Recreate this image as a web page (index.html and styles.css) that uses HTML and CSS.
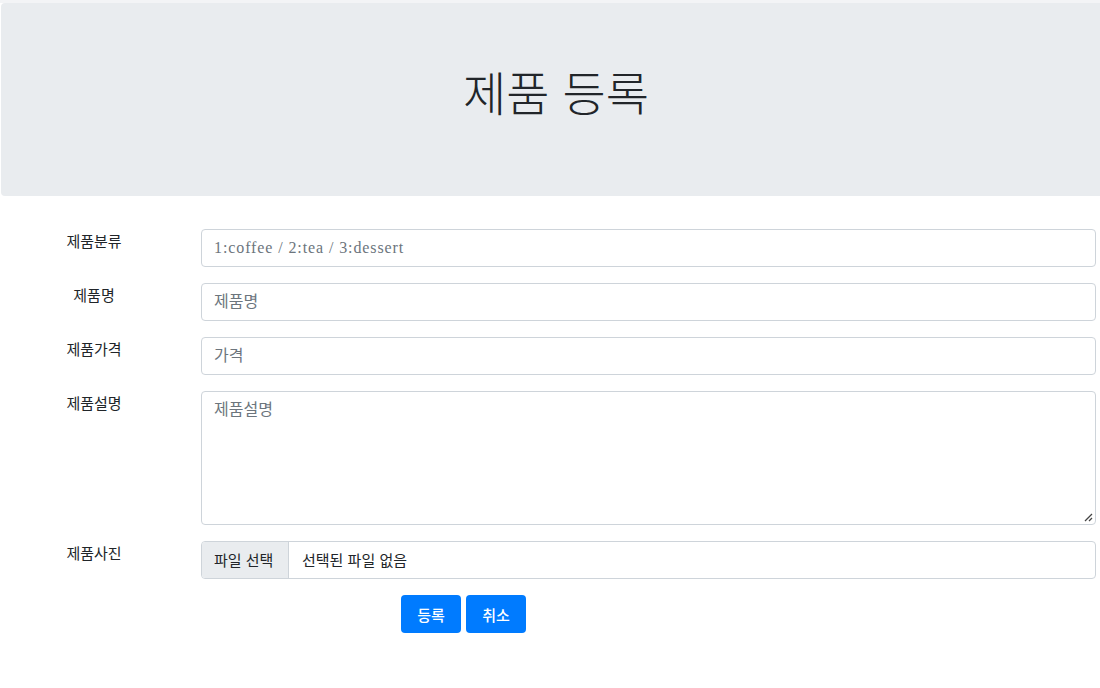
FILE: index.html
```html
<!DOCTYPE html>
<html lang="ko">
<head>
<meta charset="utf-8">
<title>제품 등록</title>
<link rel="stylesheet" href="styles.css">
</head>
<body>
<div class="topstrip"></div>
<div class="jumbotron">
  <h1 class="title">제품 등록</h1>
</div>
<form class="form">
  <label class="label">제품분류</label>
  <div class="control"><span class="ph latin">1:coffee / 2:tea / 3:dessert</span></div>

  <label class="label">제품명</label>
  <div class="control"><span class="ph">제품명</span></div>

  <label class="label">제품가격</label>
  <div class="control"><span class="ph">가격</span></div>

  <label class="label">제품설명</label>
  <div class="control textarea"><span class="ph">제품설명</span>
    <svg class="grip" width="9" height="9" viewBox="0 0 9 9"><path d="M8 1 L1 8 M8 5 L5 8" stroke="#444" stroke-width="1.3" fill="none"/></svg>
  </div>

  <label class="label">제품사진</label>
  <div class="control file"><span class="filebtn">파일 선택</span><span class="filename">선택된 파일 없음</span></div>

  <div class="spacer"></div>
  <div class="actions">
    <button type="button" class="btn">등록</button>
    <button type="button" class="btn">취소</button>
  </div>
</form>
</body>
</html>
```

FILE: styles.css
```css
html, body {
  margin: 0;
  padding: 0;
  overflow: hidden;
  background: #fff;
}
body {
  font-family: "Liberation Serif", "Noto Sans CJK KR", serif;
  color: #212529;
  font-size: 16px;
  line-height: 1.5;
}
.topstrip {
  height: 3px;
  background: #f3f4f6;
}
.jumbotron {
  box-sizing: border-box;
  margin-left: 1px;
  width: 1110px;
  height: 193px;
  padding-bottom: 16px;
  background: #e9ecef;
  border-radius: 4px;
  display: flex;
  align-items: center;
  justify-content: center;
}
.title {
  margin: 0;
  font-family: "Noto Sans CJK KR", serif;
  font-size: 47px;
  font-weight: 300;
  line-height: 1.2;
  color: #212529;
}
.form {
  display: grid;
  grid-template-columns: 188px 895px;
  column-gap: 13px;
  row-gap: 16px;
  margin-top: 33px;
}
.label {
  text-align: center;
  font-family: "Noto Sans CJK KR", serif;
  font-size: 15px;
  line-height: 24px;
  color: #212529;
}
.control {
  box-sizing: border-box;
  height: 38px;
  border: 1px solid #ced4da;
  border-radius: 4px;
  padding: 6px 12px;
  line-height: 24px;
  font-size: 16px;
  position: relative;
}
.ph {
  color: #6c757d;
}
.latin {
  letter-spacing: 0.9px;
}
.textarea {
  height: 134px;
}
.grip {
  position: absolute;
  right: 2px;
  bottom: 2px;
}
.file {
  padding: 0;
  display: flex;
  overflow: hidden;
}
.filebtn {
  background: #e9ecef;
  border-right: 1px solid #ced4da;
  padding: 6px 12px;
  width: 87px;
  box-sizing: border-box;
  color: #212529;
  font-family: "Noto Sans CJK KR", serif;
  font-size: 15px;
}
.filename {
  padding: 6px 13px;
  color: #212529;
  font-family: "Noto Sans CJK KR", serif;
  font-size: 15px;
}
.actions {
  display: flex;
  gap: 5px;
  padding-left: 200px;
}
.btn {
  width: 60px;
  height: 38px;
  border: none;
  border-radius: 4px;
  background: #007bff;
  color: #fff;
  font-family: "Noto Sans CJK KR", sans-serif;
  font-size: 15px;
  font-weight: 500;
  padding: 0;
  cursor: pointer;
}
```
